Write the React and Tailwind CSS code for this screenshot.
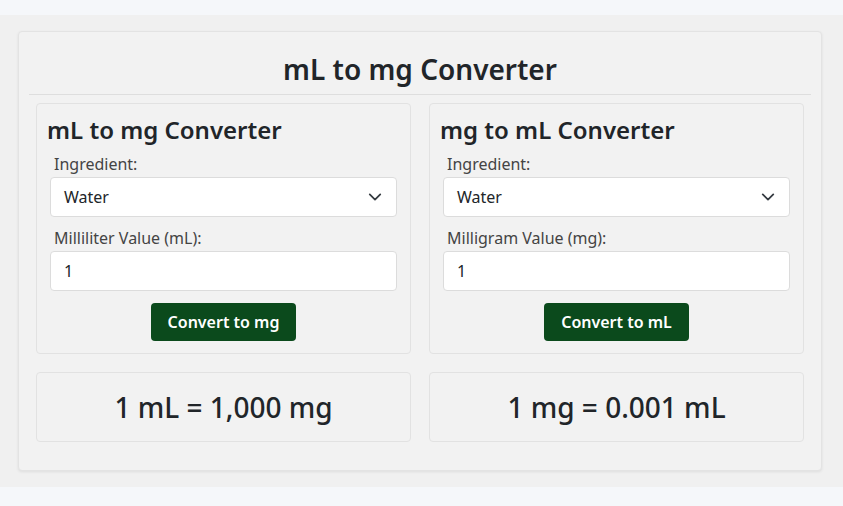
import React from "react";

function Chevron() {
  return (
    <svg width="14" height="14" viewBox="0 0 16 16" fill="none" stroke="#343a40" strokeWidth="2" strokeLinecap="round" strokeLinejoin="round">
      <path d="M2 5l6 6 6-6" />
    </svg>
  );
}

function Converter({ title, label, button }) {
  return (
    <div className="flex flex-col rounded-[4px] border border-[#e2e2e2] bg-[#f2f2f2] px-[13px] pt-[12px] pb-[12px]">
      <h2 className="ml-[-3px] text-[24px] font-semibold leading-[28px] text-[#212529]">{title}</h2>
      <label className="mt-[10px] ml-[4px] text-[16px] leading-[20px] text-[#444]">Ingredient:</label>
      <div className="mt-[3px] flex h-[40px] items-center justify-between rounded-[4px] border border-[#dcdcdc] bg-white pl-[13px] pr-[14px] text-[16px] text-[#212529]">
        <span>Water</span>
        <Chevron />
      </div>
      <label className="mt-[11px] ml-[4px] text-[16px] leading-[20px] text-[#444]">{label}</label>
      <div className="mt-[3px] flex h-[40px] items-center rounded-[4px] border border-[#dcdcdc] bg-white pl-[13px] text-[16px] text-[#212529]">
        1
      </div>
      <div className="mt-[12px] flex justify-center">
        <button className="h-[38px] rounded-[4px] bg-[#0b4a1c] px-[17px] text-[16px] font-semibold text-white">{button}</button>
      </div>
    </div>
  );
}

function Result({ text }) {
  return (
    <div className="flex h-[70px] items-center justify-center rounded-[4px] border border-[#e2e2e2] bg-[#f2f2f2] text-[28px] font-medium text-[#212529]">
      {text}
    </div>
  );
}

export default function App() {
  return (
    <div className="flex h-[506px] w-[843px] flex-col bg-[#f5f7fa]" style={{ fontFamily: '"Noto Sans", "Open Sans", sans-serif' }}>
      <div className="h-[15px] shrink-0" />
      <div className="flex h-[472px] shrink-0 flex-col bg-[#f0f0f0] pl-[18px] pr-[21px] pt-[16px]">
        <div className="flex h-[440px] flex-col rounded-[4px] border border-[#e3e3e3] bg-[#f2f2f2] shadow-[0_1px_3px_rgba(0,0,0,0.08)]">
          <div className="mx-[10px] flex h-[63px] items-center justify-center border-b border-[#dedede] pt-[12px]">
            <h1 className="text-[28px] font-semibold text-[#212529]">mL to mg Converter</h1>
          </div>
          <div className="grid grid-cols-2 gap-x-[18px] gap-y-[18px] px-[17px] pt-[8px]">
            <Converter title="mL to mg Converter" label="Milliliter Value (mL):" button="Convert to mg" />
            <Converter title="mg to mL Converter" label="Milligram Value (mg):" button="Convert to mL" />
            <Result text="1 mL = 1,000 mg" />
            <Result text="1 mg = 0.001 mL" />
          </div>
        </div>
      </div>
    </div>
  );
}
